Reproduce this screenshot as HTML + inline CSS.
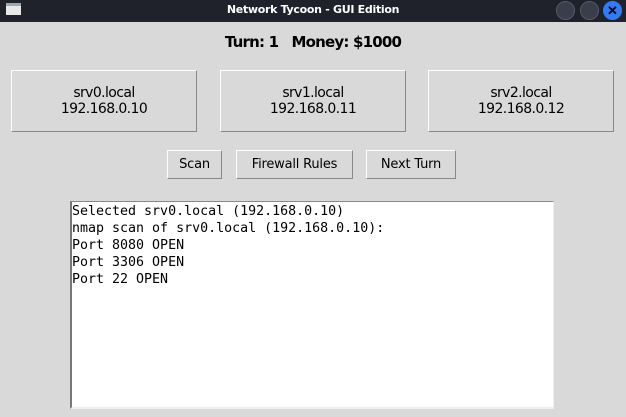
<!DOCTYPE html>
<html><head><meta charset="utf-8"><style>
*{margin:0;padding:0;box-sizing:border-box}
body{width:626px;height:417px;background:#d9d9d9;position:relative;overflow:hidden;font-family:"DejaVu Sans",sans-serif;color:#000}
.tb{position:absolute;left:0;top:0;width:626px;height:22px;background:#1f222b}
.tt{position:absolute;left:0;width:626px;top:3px;text-align:center;color:#fff;font:bold 11px "DejaVu Sans",sans-serif;letter-spacing:-0.3px}
.ic{position:absolute;left:6px;top:3px;width:15px;height:12px;background:#e8e8e8;border-top:3px solid #9aa}
.c{position:absolute;top:1px;width:19px;height:19px;border-radius:50%;background:#3a3d4a;border:1px solid #555a68}
.box{position:absolute;border:1px solid;border-color:#fff #888 #888 #fff;background:#d9d9d9;text-align:center}
.srv{top:70px;height:62px;font-size:14px;line-height:16px;padding-top:14px;letter-spacing:-0.6px}
.btn{top:150px;height:29px;font-size:13px;line-height:27px;letter-spacing:-0.2px}
.txt{position:absolute;left:70px;top:201px;width:484px;height:208px;background:#fff;border-left:2px solid #777;border-top:1px solid #888;border-right:1px solid #eee;border-bottom:2px solid #eee;font:13.3px/17px "DejaVu Sans Mono",monospace;padding:1px 0 0 0;white-space:pre}
</style></head><body>
<div class="tb"><div class="ic"></div><div class="tt">Network Tycoon - GUI Edition</div>
<div class="c" style="left:556px"></div><div class="c" style="left:580px"></div>
<div class="c" style="left:603px;background:#2e7cf6;border-color:#2e7cf6;color:#000;font:bold 13px/17px sans-serif;text-align:center">✕</div></div>
<div style="position:absolute;top:33px;left:0;width:626px;text-align:center;font:bold 15px 'DejaVu Sans',sans-serif;letter-spacing:-0.8px">Turn: 1&nbsp;&nbsp;&nbsp;Money: $1000</div>
<div class="box srv" style="left:11px;width:186px">srv0.local<br>192.168.0.10</div>
<div class="box srv" style="left:220px;width:186px">srv1.local<br>192.168.0.11</div>
<div class="box srv" style="left:428px;width:186px">srv2.local<br>192.168.0.12</div>
<div class="box btn" style="left:167px;width:55px">Scan</div>
<div class="box btn" style="left:236px;width:117px">Firewall Rules</div>
<div class="box btn" style="left:366px;width:90px">Next Turn</div>
<div class="txt">Selected srv0.local (192.168.0.10)
nmap scan of srv0.local (192.168.0.10):
Port 8080 OPEN
Port 3306 OPEN
Port 22 OPEN</div>
</body></html>
